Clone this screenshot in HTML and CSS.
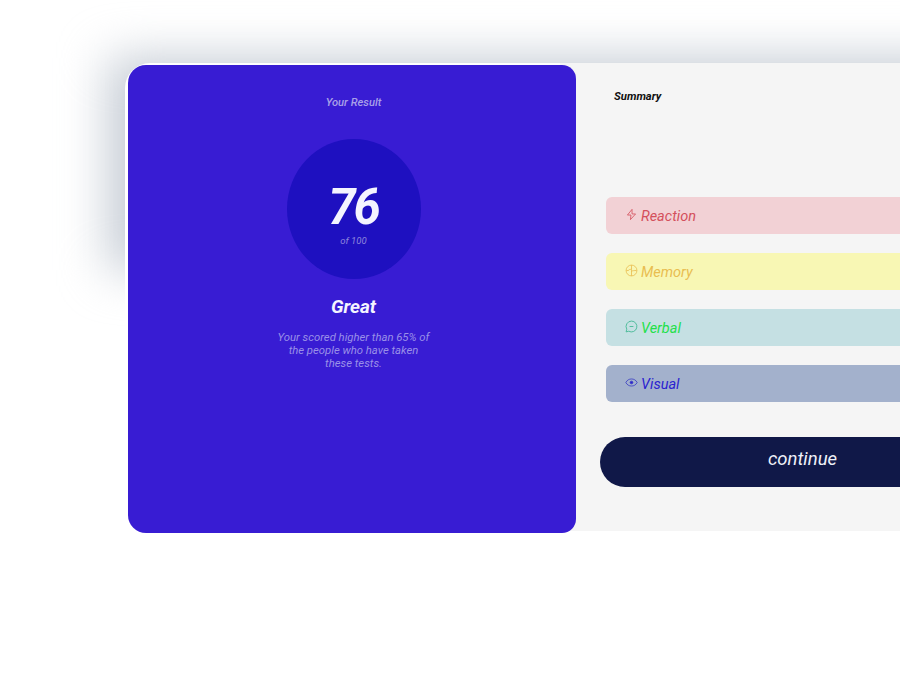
FILE: index.html
```html
<!DOCTYPE html>
<html lang="en">
<head>
    <meta charset="UTF-8">
    <meta name="viewport" content="width=device-width, initial-scale=1.0">
    <title>Results Summary</title>
    <link rel="stylesheet" href="styles.css">
</head>
<body>

    <div class="card">
        <!-- Left side with the score -->
        <div class="result">
            <h2 class="result-title">Your Result</h2>
            <div class="score-circle">
                <span class="score">76</span>
                <span class="score-max">of 100</span>
            </div>
            <h3 class="grade">Great</h3>
            <p class="result-text">Your scored higher than 65% of the people who have taken these tests.</p>
        </div>

        <!-- Right side with the categories -->
        <div class="summary">
            <h2 class="summary-title">Summary</h2>

            <div class="stat reaction">
                <svg class="stat-icon" viewBox="0 0 24 24"><path d="M13 2.500 4.500 13H11l-1 8.500L19.500 11H13z"/></svg>
                <span>Reaction</span>
            </div>
            <div class="stat memory">
                <svg class="stat-icon" viewBox="0 0 24 24"><circle cx="12" cy="12" r="10"/><path d="M12 2v20M12 8.500c-1 1.500-3 2-5 1.500M12 14c1-1.500 3-2 5-1.500M2.500 12H7M17 12h4.500"/></svg>
                <span>Memory</span>
            </div>
            <div class="stat verbal">
                <svg class="stat-icon" viewBox="0 0 24 24"><path d="M12 2a10 10 0 1 1-5 18.700L2 22l1.300-5A10 10 0 0 1 12 2z"/><path d="M8.500 12h7"/></svg>
                <span>Verbal</span>
            </div>
            <div class="stat visual">
                <svg class="stat-icon" viewBox="0 0 24 24"><path d="M1.500 12C4 7.500 7.500 5.500 12 5.500s8 2 10.500 6.500c-2.500 4.500-6 6.500-10.500 6.500S4 16.500 1.500 12z"/><circle class="pupil" cx="12" cy="12" r="2.500"/></svg>
                <span>Visual</span>
            </div>

            <button class="continue-btn">continue</button>
        </div>
    </div>

</body>
</html>
```

FILE: styles.css
```css
/* General reset */
* {
    margin: 0;
    padding: 0;
    box-sizing: border-box;
}

html, body {
    height: 100%;
    overflow: hidden;
}

body {
    font-family: Roboto, "Liberation Sans", sans-serif;
    font-style: italic;
    background-color: #ffffff;
    padding: 63px 0 0 125px;
}

/* Card */
.card {
    position: relative;
    display: flex;
    width: 775px;
    height: 468px;
    background-color: #ffffff;
    border-radius: 25px 0 0 25px;
}

/* Soft shadow that only shows behind the upper part of the card */
.card::before {
    content: "";
    position: absolute;
    z-index: -1;
    top: -5px;
    left: -16px;
    right: -60px;
    height: 212px;
    background-color: #c3cad3;
    filter: blur(24px);
}

/* Left side */
.result {
    flex: none;
    display: flex;
    flex-direction: column;
    align-items: center;
    width: 448px;
    height: 468px;
    margin: 2px 0 0 3px;
    padding: 31px 0 0 3px;
    background-color: #381cd3;
    border-radius: 18px 14px 14px 18px;
    position: relative;
    z-index: 1;
}

.result-title {
    font-size: 11.200px;
    line-height: 14px;
    font-weight: 500;
    color: #a9a0e8;
}

.score-circle {
    display: flex;
    flex-direction: column;
    align-items: center;
    width: 134px;
    height: 140px;
    margin-top: 29px;
    padding-top: 42px;
    background-color: #1e10c0;
    border-radius: 50%;
}

.score {
    font-size: 49px;
    line-height: 54px;
    font-weight: 700;
    letter-spacing: -2px;
    color: #f4f4ff;
}

.score-max {
    font-size: 9.500px;
    line-height: 12px;
    color: #8f86dd;
}

.grade {
    margin-top: 16px;
    font-size: 19px;
    line-height: 24px;
    font-weight: 700;
    color: #f4f4ff;
}

.result-text {
    width: 156px;
    margin-top: 12px;
    font-size: 11.300px;
    line-height: 13px;
    text-align: center;
    color: #9a90e8;
}

/* Right side */
.summary {
    flex: none;
    width: 340px;
    margin-left: -16px;
    padding: 27px 0 0 46px;
    background-color: #f5f5f5;
    overflow: hidden;
}

.summary-title {
    margin-left: 8px;
    font-size: 11.300px;
    line-height: 14px;
    font-weight: 700;
    color: #111111;
}

.stat {
    display: flex;
    align-items: center;
    gap: 3px;
    height: 37px;
    width: 420px;
    margin-bottom: 19px;
    padding: 1px 0 0 19px;
    border-radius: 6px;
    font-size: 14.500px;
}

.summary-title + .stat {
    margin-top: 93px;
}

.stat-icon {
    width: 13px;
    height: 13px;
    margin-top: -3px;
    fill: none;
    stroke: currentColor;
    stroke-width: 1.500;
}

.stat-icon .pupil {
    fill: currentColor;
}

.stat.reaction { background-color: #f2d1d5; color: #d4505c; }
.stat.memory { background-color: #f8f7b4; color: #e9bd50; }
.stat.verbal { background-color: #c5e0e3; color: #22e04a; }
.stat.visual { background-color: #a3b1cc; color: #2a1fd0; }

.stat.verbal .stat-icon { stroke: #38b58c; }
.stat.visual .stat-icon { stroke: #3a3cc4; }

.continue-btn {
    display: block;
    width: 405px;
    height: 50px;
    margin: 35px 0 0 -6px;
    padding-bottom: 6px;
    border: none;
    border-radius: 25px;
    background-color: #101848;
    color: #eef0f8;
    font-family: inherit;
    font-style: italic;
    font-size: 18.500px;
}
```
